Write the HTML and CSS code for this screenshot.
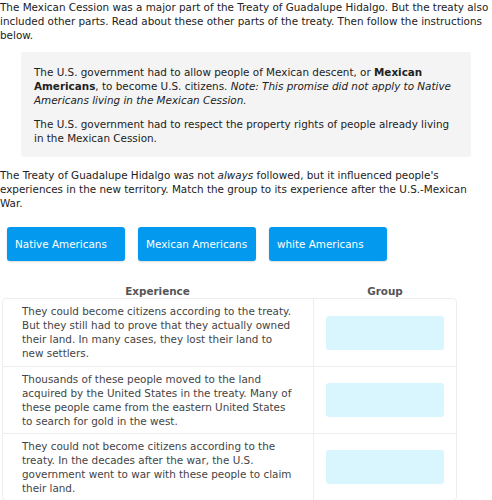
FILE: index.html
```html
<!DOCTYPE html>
<html lang="en">
<head>
    <meta charset="UTF-8">
    <meta name="viewport" content="width=device-width, initial-scale=1.0">
    <title>Treaty of Guadalupe Hidalgo</title>
    <link rel="stylesheet" href="styles.css">
</head>
<body>

    <p class="intro">The Mexican Cession was a major part of the Treaty of Guadalupe Hidalgo. But the treaty also included other parts. Read about these other parts of the treaty. Then follow the instructions below.</p>

    <div class="passage">
        <p>The U.S. government had to allow people of Mexican descent, or <b>Mexican Americans</b>, to become U.S. citizens. <i>Note: This promise did not apply to Native Americans living in the Mexican Cession.</i></p>
        <p>The U.S. government had to respect the property rights of people already living in the Mexican Cession.</p>
    </div>

    <p class="intro">The Treaty of Guadalupe Hidalgo was not <i>always</i> followed, but it influenced people's experiences in the new territory. Match the group to its experience after the U.S.-Mexican War.</p>

    <div class="choices">
        <div class="choice">Native Americans</div>
        <div class="choice">Mexican Americans</div>
        <div class="choice">white Americans</div>
    </div>

    <div class="match">
        <div class="match-head">
            <div>Experience</div>
            <div>Group</div>
        </div>
        <div class="match-table">
            <div class="match-row">
                <div class="experience">They could become citizens according to the treaty. But they still had to prove that they actually owned their land. In many cases, they lost their land to new settlers.</div>
                <div class="slot"><div class="drop"></div></div>
            </div>
            <div class="match-row">
                <div class="experience">Thousands of these people moved to the land acquired by the United States in the treaty. Many of these people came from the eastern United States to search for gold in the west.</div>
                <div class="slot"><div class="drop"></div></div>
            </div>
            <div class="match-row">
                <div class="experience">They could not become citizens according to the treaty. In the decades after the war, the U.S. government went to war with these people to claim their land.</div>
                <div class="slot"><div class="drop"></div></div>
            </div>
        </div>
    </div>

</body>
</html>
```

FILE: styles.css
```css
* {
    margin: 0;
    padding: 0;
    box-sizing: border-box;
}

body {
    font-family: 'DejaVu Sans', Verdana, sans-serif;
    font-size: 10.4px;
    line-height: 14px;
    color: #222;
    background: white;
    width: 492px;
}

.passage {
    background: #f4f4f4;
    border-radius: 3px;
    margin: 10px 21px 11px 21px;
    padding: 13px 13px 12px 13px;
}

.passage p + p {
    margin-top: 10px;
}

.choices {
    display: flex;
    gap: 13px;
    margin: 17px 0 0 7px;
}

.choice {
    width: 118px;
    height: 34px;
    line-height: 34px;
    padding-left: 8px;
    background: #0399ee;
    color: white;
    border-radius: 3px;
    box-shadow: 0 1px 2px rgba(0, 0, 0, 0.15);
}

.match {
    margin-top: 23px;
    width: 457px;
    padding-left: 2px;
}

.match-head {
    display: grid;
    grid-template-columns: 311px 1fr;
    font-weight: bold;
    color: #555;
    text-align: center;
    height: 14px;
}

.match-table {
    border: 1px solid #eee;
    border-radius: 4px;
}

.match-row {
    display: grid;
    grid-template-columns: 311px 1fr;
    height: 67px;
}

.match-row + .match-row {
    border-top: 1px solid #eee;
}

.experience {
    color: #444;
    padding: 5px 18px 0 19px;
    border-right: 1px solid #eee;
}

.slot {
    display: flex;
    align-items: center;
    justify-content: center;
}

.drop {
    width: 118px;
    height: 34px;
    background: #d9f6ff;
    border-radius: 3px;
}
```
